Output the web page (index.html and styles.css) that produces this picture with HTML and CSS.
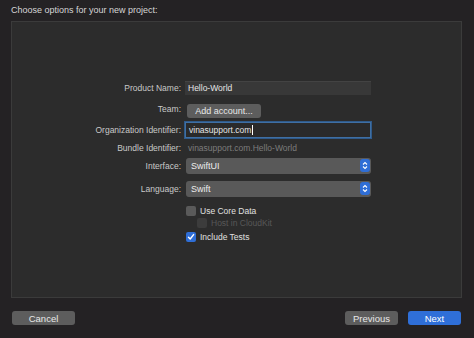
FILE: index.html
```html
<!DOCTYPE html>
<html lang="en">
<head>
    <meta charset="UTF-8">
    <title>Choose options for your new project</title>
    <link rel="stylesheet" href="styles.css">
</head>
<body>
    <div class="sheet">
        <div class="sheet-title">Choose options for your new project:</div>

        <div class="panel">
            <div class="form">
                <div class="row">
                    <span class="label">Product Name:</span>
                    <div class="text-field">Hello-World</div>
                </div>
                <div class="row">
                    <span class="label">Team:</span>
                    <div class="field-wrap"><button class="btn btn-small">Add account...</button></div>
                </div>
                <div class="row">
                    <span class="label">Organization Identifier:</span>
                    <div class="text-field focused">vinasupport.com<span class="caret"></span></div>
                </div>
                <div class="row row-short">
                    <span class="label">Bundle Identifier:</span>
                    <div class="static-value">vinasupport.com.Hello-World</div>
                </div>
                <div class="row">
                    <span class="label">Interface:</span>
                    <div class="popup">
                        <span>SwiftUI</span>
                        <span class="stepper"><svg width="6" height="9" viewBox="0 0 6 9"><path d="M1 3.5 L3 1.5 L5 3.5 M1 5.5 L3 7.5 L5 5.5" fill="none" stroke="#fff" stroke-width="1.1"/></svg></span>
                    </div>
                </div>
                <div class="row row-spaced">
                    <span class="label">Language:</span>
                    <div class="popup">
                        <span>Swift</span>
                        <span class="stepper"><svg width="6" height="9" viewBox="0 0 6 9"><path d="M1 3.5 L3 1.5 L5 3.5 M1 5.5 L3 7.5 L5 5.5" fill="none" stroke="#fff" stroke-width="1.1"/></svg></span>
                    </div>
                </div>

                <div class="checks">
                    <div class="check">
                        <span class="box"></span>
                        <span>Use Core Data</span>
                    </div>
                    <div class="check check-sub disabled">
                        <span class="box"></span>
                        <span>Host in CloudKit</span>
                    </div>
                    <div class="check check-last">
                        <span class="box checked"><svg width="8" height="8" viewBox="0 0 8 8"><path d="M1.5 4.2 L3.2 6 L6.6 1.6" fill="none" stroke="#fff" stroke-width="1.4" stroke-linecap="round" stroke-linejoin="round"/></svg></span>
                        <span>Include Tests</span>
                    </div>
                </div>
            </div>
        </div>

        <div class="footer">
            <button class="btn btn-footer">Cancel</button>
            <div class="footer-right">
                <button class="btn btn-footer">Previous</button>
                <button class="btn btn-footer btn-primary">Next</button>
            </div>
        </div>
    </div>
</body>
</html>
```

FILE: styles.css
```css
* {
    margin: 0;
    padding: 0;
    box-sizing: border-box;
}

html, body {
    width: 474px;
    height: 338px;
    overflow: hidden;
}

body {
    background: #242224;
    font-family: 'Liberation Sans', Arial, sans-serif;
    color: #dcdcdc;
}

.sheet {
    padding: 4px 12px 0 11px;
}

.sheet-title {
    font-size: 9px;
    color: #d6d6d6;
    height: 17px;
    line-height: 12px;
}

.panel {
    height: 277px;
    background: #2c2c2c;
    border: 1px solid #3b3b3b;
    padding-top: 55px;
}

.form {
    display: flex;
    flex-direction: column;
}

.row {
    display: flex;
    align-items: center;
    height: 21px;
}

.row-short {
    height: 15px;
}

.row-spaced {
    margin-top: 2px;
}

.label {
    width: 173px;
    flex: none;
    text-align: right;
    padding-right: 4px;
    font-size: 8.5px;
    color: #c9c9c9;
}

.text-field {
    width: 186px;
    height: 14px;
    background: #383838;
    border-top: 1px solid #434343;
    font-size: 8.5px;
    line-height: 12px;
    padding-left: 3px;
    color: #e6e6e6;
    display: flex;
    align-items: center;
}

.text-field.focused {
    height: 16px;
    border: 1px solid #3f6fa3;
    box-shadow: 0 0 0 1px #2f5a8a;
    background: #2a2a2a;
}

.caret {
    width: 1px;
    height: 10px;
    background: #fff;
    margin-left: 1px;
}

.static-value {
    font-size: 8.5px;
    color: #7c7c7c;
    padding-left: 3px;
}

.field-wrap {
    padding-left: 2px;
}

.btn {
    font-family: 'Liberation Sans', Arial, sans-serif;
    border: none;
    color: #e8e8e8;
    background: #5d5d5d;
    border-radius: 3px;
}

.btn-small {
    width: 74px;
    height: 14px;
    font-size: 9px;
}

.popup {
    width: 185px;
    height: 16px;
    margin-left: 1px;
    background: #595959;
    border-radius: 3px;
    display: flex;
    align-items: center;
    justify-content: space-between;
    padding: 0 1px 0 5px;
    font-size: 9px;
    color: #ececec;
}

.stepper {
    width: 10px;
    height: 13px;
    background: #2f6ed6;
    border-radius: 3px;
    display: flex;
    align-items: center;
    justify-content: center;
}

.checks {
    padding-left: 174px;
    padding-top: 7px;
    display: flex;
    flex-direction: column;
    gap: 2px;
}

.check {
    display: flex;
    align-items: center;
    gap: 4px;
    font-size: 8.5px;
    color: #e0e0e0;
    height: 10px;
}

.check-sub {
    padding-left: 11px;
}

.check-last {
    margin-top: 2px;
}

.check.disabled {
    color: #585858;
}

.box {
    width: 10px;
    height: 10px;
    border-radius: 2px;
    background: #5a5a5a;
    display: flex;
    align-items: center;
    justify-content: center;
}

.disabled .box {
    background: #3c3c3c;
}

.box.checked {
    background: #2f6ed6;
}

.footer {
    display: flex;
    justify-content: space-between;
    padding: 13px 1px 0 1px;
}

.footer-right {
    display: flex;
    gap: 10px;
}

.btn-footer {
    height: 14px;
    font-size: 9.5px;
    width: 63px;
}

.footer-right .btn-footer {
    width: 53px;
}

.btn-primary {
    background: #2f6fd8;
    color: #fff;
}
```
